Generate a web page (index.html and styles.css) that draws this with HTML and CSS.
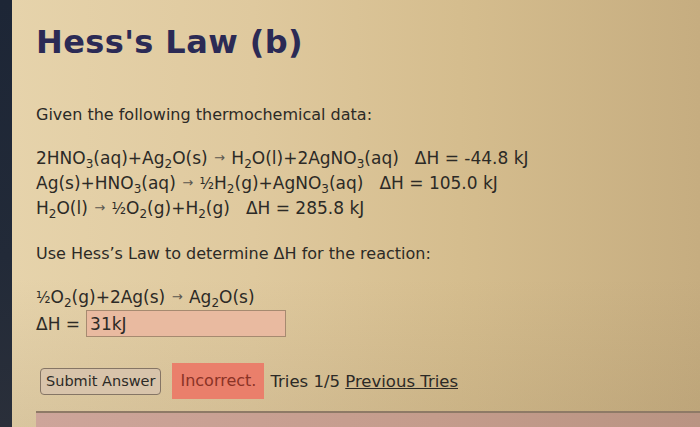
FILE: index.html
```html
<!DOCTYPE html>
<html lang="en">
<head>
<meta charset="utf-8">
<title>Hess's Law (b)</title>
<link rel="stylesheet" href="styles.css">
</head>
<body>
<div class="screen">
  <div class="edge"></div>
  <main class="page">
    <h1 class="title">Hess's Law (b)</h1>
    <p class="intro">Given the following thermochemical data:</p>
    <div class="data">
      <div class="eq">2HNO<sub>3</sub>(aq)+Ag<sub>2</sub>O(s) <span class="arrow">→</span> H<sub>2</sub>O(l)+2AgNO<sub>3</sub>(aq)<span class="dh">ΔH = -44.8 kJ</span></div>
      <div class="eq">Ag(s)+HNO<sub>3</sub>(aq) <span class="arrow">→</span> <span class="half">½</span>H<sub>2</sub>(g)+AgNO<sub>3</sub>(aq)<span class="dh">ΔH = 105.0 kJ</span></div>
      <div class="eq">H<sub>2</sub>O(l) <span class="arrow">→</span> <span class="half">½</span>O<sub>2</sub>(g)+H<sub>2</sub>(g)<span class="dh">ΔH = 285.8 kJ</span></div>
    </div>
    <p class="prompt">Use Hess’s Law to determine ΔH for the reaction:</p>
    <div class="eq target"><span class="half">½</span>O<sub>2</sub>(g)+2Ag(s) <span class="arrow">→</span> Ag<sub>2</sub>O(s)</div>
    <div class="answer">
      <span class="label">ΔH =</span>
      <input class="field" type="text" value="31kJ">
    </div>
    <div class="actions">
      <button class="submit" type="button">Submit Answer</button>
      <span class="status">Incorrect.</span>
      <span class="tries">Tries 1/5 <a href="#" class="prev">Previous Tries</a></span>
    </div>
    <div class="feedback"></div>
  </main>
</div>
</body>
</html>
```

FILE: styles.css
```css
html, body {
  margin: 0;
  padding: 0;
  height: 100%;
  overflow: hidden;
}

body {
  font-family: "DejaVu Sans", Verdana, sans-serif;
  color: #2c2a26;
}

.screen {
  display: flex;
  height: 427px;
  width: 700px;
}

.edge {
  width: 12px;
  flex: none;
  background: linear-gradient(180deg, #1d2636 0%, #222a38 60%, #2a2f3a 100%);
}

.page {
  flex: 1;
  padding: 0 0 0 24px;
  display: flex;
  flex-direction: column;
  background:
    linear-gradient(180deg, rgba(255, 250, 235, 0) 65%, rgba(120, 100, 70, 0.12) 100%),
    linear-gradient(90deg, #e6d3ab 0%, #dfc99e 35%, #d5bd8e 65%, #c6ad80 100%);
}

.title {
  margin: 23px 0 0;
  font-size: 32px;
  font-weight: bold;
  color: #2b2a55;
  line-height: 38px;
  letter-spacing: 0.4px;
}

.intro {
  margin: 43px 0 0;
  font-size: 16px;
  line-height: 22px;
}

.data {
  margin-top: 20px;
}

.eq {
  font-size: 17px;
  line-height: 23.5px;
  white-space: nowrap;
}

sub {
  font-size: 12px;
  vertical-align: -4px;
  line-height: 0;
}

.arrow {
  font-size: 13px;
  color: #5a564f;
  vertical-align: 2px;
  margin: 0 1px;
}

.half {
  font-size: 15px;
}

.dh {
  margin-left: 16px;
}

.prompt {
  margin: 21px 0 0;
  font-size: 16px;
  line-height: 22px;
}

.target {
  margin-top: 20px;
}

.answer {
  display: flex;
  align-items: center;
  gap: 6px;
  margin-top: 0;
  font-size: 17px;
}

.field {
  width: 200px;
  height: 27px;
  box-sizing: border-box;
  border: 1px solid #a68a70;
  background: #e9baa0;
  font: 17px "DejaVu Sans", Verdana, sans-serif;
  color: #2c2a26;
  padding: 0 3px;
}

.actions {
  display: flex;
  align-items: center;
  margin-top: 26px;
  margin-left: 4px;
  font-size: 16.5px;
}

.submit {
  font: 14.5px "DejaVu Sans", Verdana, sans-serif;
  color: #2c2a26;
  height: 27px;
  padding: 0 5px;
  background: #d8c4ab;
  border: 1px solid #857565;
  border-radius: 4px;
}

.status {
  margin-left: 11px;
  background: #ea7f6b;
  color: #8a3326;
  padding: 0 8px;
  height: 36px;
  line-height: 36px;
  font-size: 16px;
}

.tries {
  margin-left: 6px;
}

.prev {
  color: #2c2a26;
}

.feedback {
  margin-top: 12px;
  flex: 1;
  border-top: 2px solid #8e7a66;
  background: linear-gradient(90deg, #cda59a 0%, #c49c8c 60%, #b99483 100%);
}
```
